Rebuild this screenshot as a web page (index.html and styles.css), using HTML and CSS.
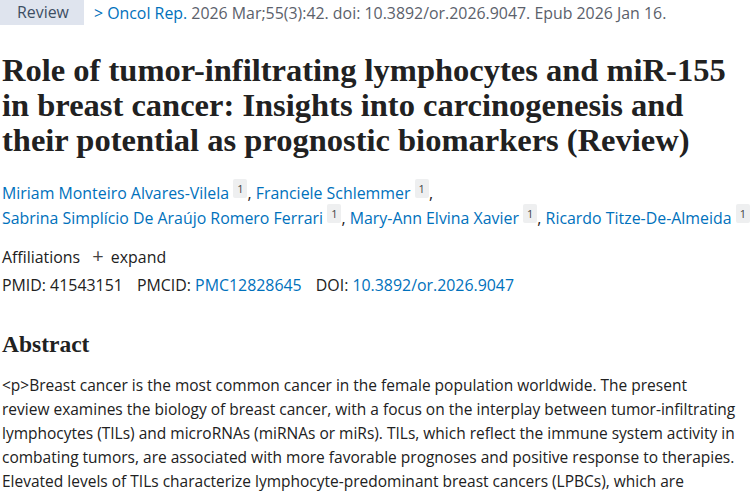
FILE: index.html
```html
<!DOCTYPE html>
<html>
<head>
<meta charset="utf-8">
<link rel="stylesheet" href="styles.css">
</head>
<body>
<div class="page">
  <div class="header">
    <span class="badge">Review</span>
    <span class="cite"><span class="chev">&gt;</span> <a class="link" href="#">Oncol Rep.</a> 2026 Mar;55(3):42. doi: 10.3892/or.2026.9047. Epub 2026 Jan 16.</span>
  </div>
  <h1 class="title">Role of tumor-infiltrating lymphocytes and miR-155 in breast cancer: Insights into carcinogenesis and their potential as prognostic biomarkers (Review)</h1>
  <div class="authors">
    <a class="link" href="#">Miriam Monteiro Alvares-Vilela</a> <sup class="aff">1</sup>, <a class="link" href="#">Franciele Schlemmer</a> <sup class="aff">1</sup>,<br>
    <a class="link" href="#">Sabrina Simplício De Araújo Romero Ferrari</a> <sup class="aff">1</sup>, <a class="link" href="#">Mary-Ann Elvina Xavier</a> <sup class="aff">1</sup>, <a class="link" href="#">Ricardo Titze-De-Almeida</a> <sup class="aff">1</sup>
  </div>
  <div class="affil">Affiliations <span class="plus">+</span> expand</div>
  <div class="ids">
    <span class="id">PMID: 41543151</span>
    <span class="id">PMCID: <a class="link" href="#">PMC12828645</a></span>
    <span class="id">DOI: <a class="link" href="#">10.3892/or.2026.9047</a></span>
  </div>
  <h2 class="abs-title">Abstract</h2>
  <p class="abs">&lt;p&gt;Breast cancer is the most common cancer in the female population worldwide. The present<br>
  review examines the biology of breast cancer, with a focus on the interplay between tumor-infiltrating<br>
  lymphocytes (TILs) and microRNAs (miRNAs or miRs). TILs, which reflect the immune system activity in<br>
  combating tumors, are associated with more favorable prognoses and positive response to therapies.<br>
  Elevated levels of TILs characterize lymphocyte-predominant breast cancers (LPBCs), which are</p>
</div>
</body>
</html>
```
FILE: styles.css
```css
html, body { margin: 0; padding: 0; background: #fff; }
body { font-family: "Open Sans", "Noto Sans", sans-serif; color: #212121; }
.page { width: 748px; padding-left: 2px; }
.header { display: flex; align-items: center; height: 25px; font-size: 15.9px; }
.badge { background: #dfe4ee; color: #3d4e63; padding: 0 15px 0 17px; height: 25px; line-height: 25px; margin-left: -2px; }
.cite { color: #5b616b; margin-left: 10px; }
.chev { color: #0071bc; }
.link { color: #0071bc; text-decoration: none; }
.title { font-family: "Liberation Serif", serif; font-weight: bold; font-size: 32.5px; line-height: 35px; margin: 28px 0 0 0; color: #212121; }
.authors { margin-top: 23px; font-size: 15.9px; line-height: 25px; }
.aff { font-size: 11px; background: #eeeff0; color: #444; padding: 2px 4px; border-radius: 2px; vertical-align: 6px; line-height: 1; }
.affil { margin-top: 12px; font-size: 15.9px; line-height: 26px; }
.plus { font-size: 20px; font-weight: 400; margin: 0 3px 0 8px; color: #444; }
.ids { font-size: 15.9px; line-height: 26px; margin-top: 2px; }
.id { margin-right: 10px; }
.abs-title { font-family: "Liberation Serif", serif; font-weight: bold; font-size: 23.5px; margin: 31px 0 0 0; line-height: 30px; }
.abs { font-size: 15.5px; line-height: 24px; margin: 14px 0 0 0; white-space: nowrap; }
```
